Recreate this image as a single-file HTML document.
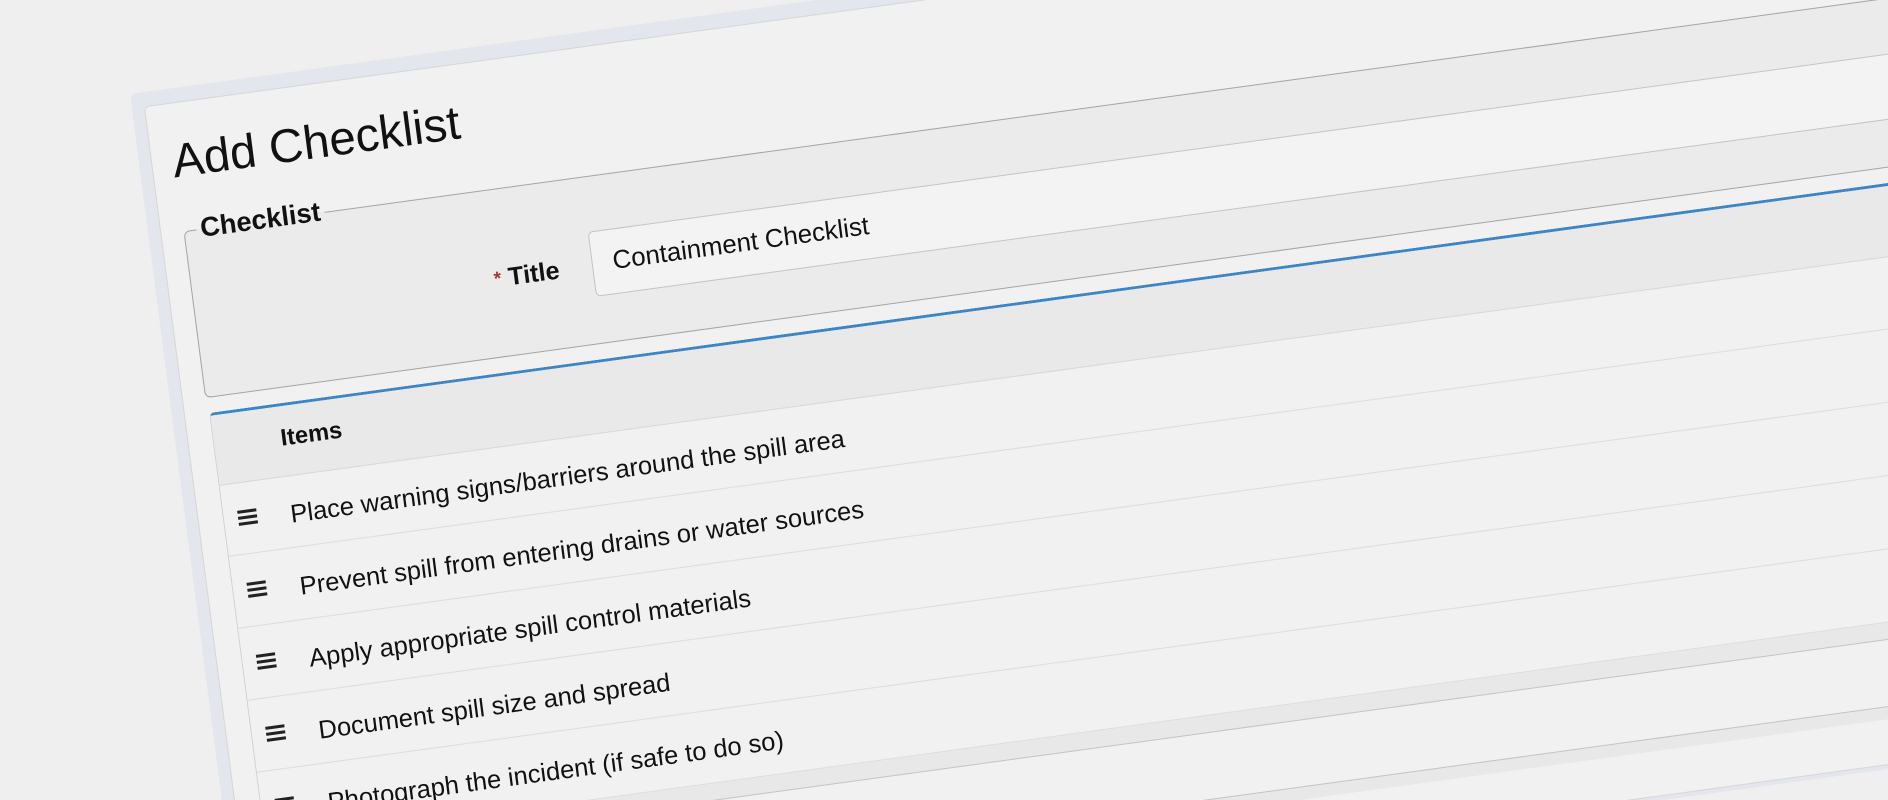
<!DOCTYPE html>
<html><head><meta charset="utf-8"><style>
html,body{margin:0;padding:0;width:1888px;height:800px;overflow:hidden;background:#efefef;font-family:"Liberation Sans",Arial,sans-serif;color:#111}
.clip{position:absolute;left:0;top:0;width:1888px;height:800px;overflow:hidden}
.w{position:absolute;left:0;top:0;transform-origin:0 0;transform:matrix(1,-0.137,0.13,1,130,94)}
.a{position:absolute;white-space:nowrap}
.frame{left:0;top:0;width:2400px;height:900px;background:#e4e6ed;border-radius:6px}
.card{left:12px;top:14px;width:2380px;height:880px;background:#f1f1f1;border:1px solid #d6d6d6;border-radius:5px}
.fs{left:35px;top:142px;width:2300px;height:165px;background:#ebebeb;border:1.5px solid #a4a4a4;border-radius:6px}
.leg{left:48px;top:128px;font-size:27px;line-height:27px;font-weight:bold;padding:0 4px;background:linear-gradient(#f1f1f1 50%,#ebebeb 50%)}
.inp{left:432px;top:197px;width:1900px;height:63px;background:#f3f3f3;border:1.5px solid #c4c4c4;border-radius:5px}
.panel{left:37px;top:324px;width:2300px;height:560px;border-top:3px solid #3d86c6;border-left:1px solid #cfcfcf;border-radius:5px 0 0 0;background:#f1f1f1}
.hdr{left:38px;top:327px;width:2300px;height:69px;background:#e9e9e9;border-bottom:1px solid #d8d8d8}
.row{left:38px;width:2300px;height:71px;border-bottom:1px solid #dcdcdc}
.ham{width:19px;height:3px;background:#222;box-shadow:0 6px 0 #222,0 12px 0 #222}
.t{font-size:25.3px;line-height:24px}
</style></head><body>
<div class="clip">
<div class="w">
 <div class="a frame"></div>
 <div class="a card"></div>
 <div class="a" style="left:33px;top:48px;font-size:47px;line-height:47px">Add Checklist</div>
 <div class="a fs"></div>
 <div class="a leg">Checklist</div>
 <div class="a" style="left:334px;top:219px;font-size:25px;line-height:25px;font-weight:bold"><span style="color:#a33;font-size:19px;vertical-align:2px">*</span> Title</div>
 <div class="a inp"></div>
 <div class="a" style="left:453px;top:217px;font-size:25.6px;line-height:25px">Containment Checklist</div>
 <div class="a panel"></div>
 <div class="a hdr"></div>
 <div class="a" style="left:104px;top:347px;font-size:23.5px;line-height:23px;font-weight:bold">Items</div>

 <div class="a row" style="top:396px"></div>
 <div class="a ham" style="left:52px;top:424px"></div>
 <div class="a t" style="left:104px;top:423px">Place warning signs/barriers around the spill area</div>

 <div class="a row" style="top:468px"></div>
 <div class="a ham" style="left:52px;top:496px"></div>
 <div class="a t" style="left:104px;top:495px">Prevent spill from entering drains or water sources</div>

 <div class="a row" style="top:540px"></div>
 <div class="a ham" style="left:52px;top:568px"></div>
 <div class="a t" style="left:104px;top:567px">Apply appropriate spill control materials</div>

 <div class="a row" style="top:612px"></div>
 <div class="a ham" style="left:52px;top:640px"></div>
 <div class="a t" style="left:104px;top:639px">Document spill size and spread</div>

 <div class="a row" style="top:684px"></div>
 <div class="a ham" style="left:52px;top:712px"></div>
 <div class="a t" style="left:104px;top:711px">Photograph the incident (if safe to do so)</div>

 <div class="a" style="left:38px;top:756px;width:2300px;height:16px;background:#e8e8e8;border-bottom:1.5px solid #c4c4c4"></div>
 <div class="a" style="left:38px;top:838px;width:2300px;height:12px;background:#e8e8e8;border-top:1.5px solid #c4c4c4"></div>
</div>
</div>
</body></html>
